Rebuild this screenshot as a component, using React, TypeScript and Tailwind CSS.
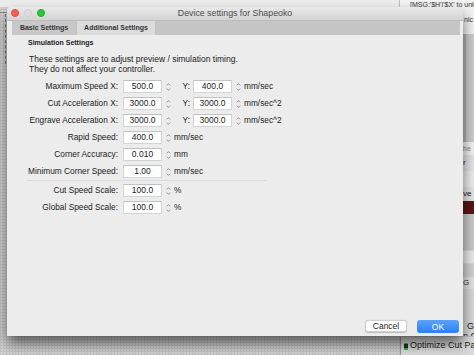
import React from "react";

type Row = {
  label: string;
  x: string;
  y?: string;
  unit: string;
};

const rows: Row[] = [
  { label: "Maximum Speed X:", x: "500.0", y: "400.0", unit: "mm/sec" },
  { label: "Cut Acceleration X:", x: "3000.0", y: "3000.0", unit: "mm/sec^2" },
  { label: "Engrave Acceleration X:", x: "3000.0", y: "3000.0", unit: "mm/sec^2" },
  { label: "Rapid Speed:", x: "400.0", unit: "mm/sec" },
  { label: "Corner Accuracy:", x: "0.010", unit: "mm" },
  { label: "Minimum Corner Speed:", x: "1.00", unit: "mm/sec" },
];

const scales: Row[] = [
  { label: "Cut Speed Scale:", x: "100.0", unit: "%" },
  { label: "Global Speed Scale:", x: "100.0", unit: "%" },
];

function Spinner() {
  return (
    <div className="flex w-[12px] justify-center">
      <svg width="5" height="10" viewBox="0 0 5 10" fill="none" stroke="#8a8a8a" strokeWidth="0.9">
        <path d="M0.8 3.4 L2.5 1.6 L4.2 3.4" />
        <path d="M0.8 6.6 L2.5 8.4 L4.2 6.6" />
      </svg>
    </div>
  );
}

function Box({ value }: { value: string }) {
  return (
    <div className="flex h-[13px] w-[39px] items-center justify-center border border-[#d4d4d4] border-t-[#c2c2c2] bg-white text-[8.5px] text-[#222]">
      {value}
    </div>
  );
}

function SettingRow({ row }: { row: Row }) {
  return (
    <div className="flex h-[17px] items-center text-[8.3px] text-[#222]">
      <div className="w-[112px] pr-[1px] text-right">{row.label}</div>
      <div className="w-[4px]" />
      <Box value={row.x} />
      <Spinner />
      {row.y && (
        <>
          <div className="w-[19px] pr-[3px] text-right">Y:</div>
          <Box value={row.y} />
          <Spinner />
        </>
      )}
      <div>{row.unit}</div>
    </div>
  );
}

export default function App() {
  return (
    <div className="relative h-[355px] w-[474px] overflow-hidden bg-[#d6d6d6] bg-[repeating-linear-gradient(90deg,#c4c4c4_0_1px,transparent_1px_3px),repeating-linear-gradient(0deg,#c4c4c4_0_1px,transparent_1px_3px)] font-['Liberation_Sans',sans-serif]">
      {/* background app behind the dialog */}
      <div className="absolute left-0 top-0 h-[7px] w-[474px] bg-[#ececec]" />
      <div className="absolute left-[0px] top-[12px] h-[1px] w-[7px] bg-[#888]" />
      <div className="absolute left-[5px] top-[14px] h-[50px] w-[1px] border-l border-dashed border-[#777]" />
      <div className="absolute left-[399px] top-0 flex h-[34px] w-[75px] flex-col border-l border-[#bdbdbd] bg-[#f2f2f2] pl-[10px] text-[7px] leading-[9px] text-[#333]">
        <span className="whitespace-nowrap">[MSG:'$H'|'$X' to unlock]</span>
        <span className="whitespace-nowrap pl-[54px] pt-[6px]">nlc</span>
      </div>
      <div className="absolute left-[463px] top-[34px] flex h-[302px] w-[11px] flex-col overflow-hidden bg-[#c6c6c6]">
        <div className="h-[108px] shrink-0 border-l-[3px] border-[#b4b4b4] bg-[#cbcbcb]" />
        <div className="h-[13px] shrink-0 whitespace-nowrap bg-[#f1f1f1] text-[7px] leading-[13px] text-[#888]">he</div>
        <div className="h-[16px] shrink-0 whitespace-nowrap bg-[#e4e4e4] text-[8px] leading-[16px] text-[#222]">r</div>
        <div className="h-[16px] shrink-0 bg-[#ececec]" />
        <div className="h-[14px] shrink-0 whitespace-nowrap bg-[#e4e4e4] text-[8px] leading-[14px] text-[#222]">ve</div>
        <div className="h-[13px] shrink-0 bg-[#5a1616]" />
        <div className="h-[36px] shrink-0 bg-[#c9c9c9]" />
        <div className="h-[14px] shrink-0 border-y border-[#d8d8d8] bg-[#e9e9e9]" />
        <div className="h-[13px] shrink-0 bg-[#d0d0d0]" />
        <div className="h-[12px] shrink-0 whitespace-nowrap bg-[#e2e2e2] text-[8px] leading-[12px] text-[#333]">G</div>
        <div className="h-[32px] shrink-0 bg-[#d8d8d8]" />
        <div className="h-[10px] shrink-0 whitespace-nowrap bg-[#d8d8d8] pl-[4px] text-[9px] leading-[10px] text-[#222]">Ge</div>
        <div className="h-[10px] shrink-0 whitespace-nowrap bg-[#d8d8d8] text-[9px] leading-[10px] text-[#222]">n C</div>
      </div>
      <div className="absolute left-[400px] top-[337px] flex h-[18px] w-[74px] items-center gap-[2px] border-l border-[#999] bg-[#dadada] pl-[3px] text-[9px] text-[#222]">
        <span className="flex h-[7px] w-[9px] items-center justify-center rounded-[1px] bg-[#3fae3f]">
          <span className="h-[4px] w-[4px] bg-[#153a15]" />
        </span>
        <span className="whitespace-nowrap">Optimize Cut Path</span>
      </div>

      {/* dialog window */}
      <div className="absolute left-[7px] top-[7px] flex h-[329px] w-[456px] flex-col overflow-hidden rounded-t-[4px] bg-[#ececec] shadow-[0_8px_14px_rgba(0,0,0,0.55)]">
        <div className="relative flex h-[14px] items-center justify-center border-b border-[#bcbcbc] bg-[linear-gradient(#e9e9e9,#d3d3d3)]">
          <div className="absolute left-[4px] top-[2px] flex gap-[5px]">
            <span className="h-[8px] w-[8px] rounded-full border border-[#e0443e] bg-[#fd5f57]" />
            <span className="h-[8px] w-[8px] rounded-full border border-[#cfcfcf] bg-[#dcdcdc]" />
            <span className="h-[8px] w-[8px] rounded-full border border-[#1aab29] bg-[#2ac940]" />
          </div>
          <span className="text-[8.8px] text-[#4c4c4c]">Device settings for Shapeoko</span>
        </div>

        <div className="ml-[5px] mr-[3px] flex h-[14px] bg-[#c5c5c5] text-[7px] font-bold text-[#333]">
          <div className="flex w-[64px] items-center justify-center bg-[#c8c8c8]">Basic Settings</div>
          <div className="flex w-[80px] items-center justify-center border-x border-[#c0c0c0] bg-[#dcdcdc]">Additional Settings</div>
        </div>

        <div className="flex flex-col pt-[3px]">
          <div className="pl-[21px] text-[7px] font-bold leading-[10px] text-[#222]">Simulation Settings</div>
          <div className="pl-[22px] pt-[6px] text-[8.5px] leading-[10px] text-[#222]">
            <div>These settings are to adjust preview / simulation timing.</div>
            <div>They do not affect your controller.</div>
          </div>
          <div className="pt-[4px]">
            {rows.map((r) => (
              <SettingRow key={r.label} row={r} />
            ))}
          </div>
          <div className="mb-[1px] ml-[20px] h-[1px] w-[240px] bg-[#dcdcdc]" />
          <div>
            {scales.map((r) => (
              <SettingRow key={r.label} row={r} />
            ))}
          </div>
        </div>

        <div className="mt-auto flex justify-end gap-[10px] pb-[3px] pr-[4px]">
          <button className="h-[12px] w-[42px] rounded-[3px] border border-[#d0d0d0] bg-white text-[8.5px] leading-[10px] text-[#222] shadow-[0_0.5px_1px_rgba(0,0,0,0.2)]">
            Cancel
          </button>
          <button className="h-[13px] w-[42px] rounded-[3px] bg-[linear-gradient(#5aa2fb,#2c7ff5)] text-[8.5px] leading-[12px] text-white">
            OK
          </button>
        </div>
      </div>
    </div>
  );
}
